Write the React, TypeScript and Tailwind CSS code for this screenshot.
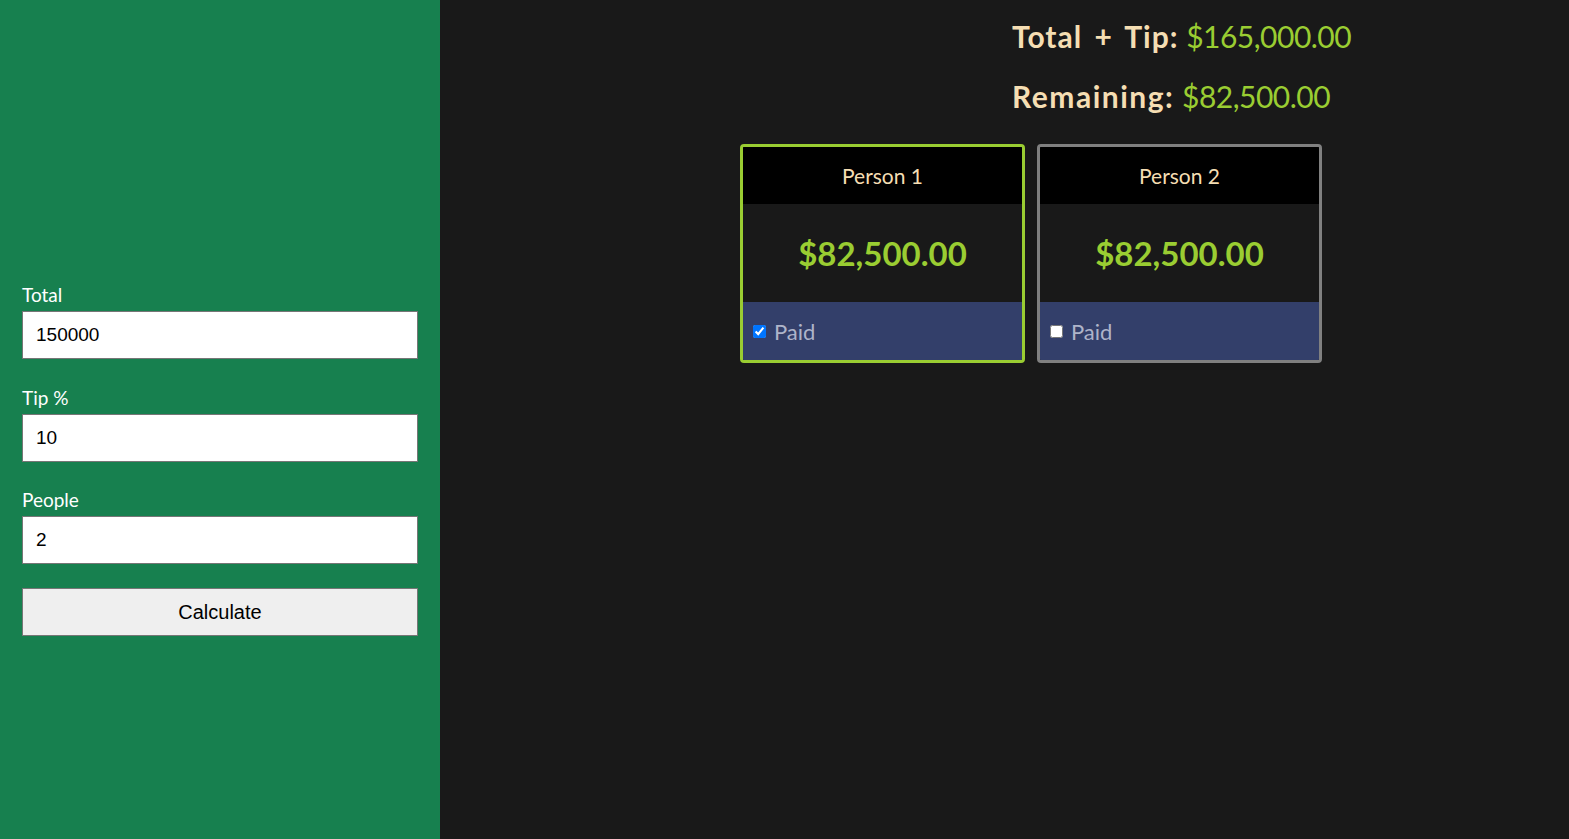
import { useState } from "react";

const font = { fontFamily: "Lato, 'Open Sans', sans-serif" };
const arial = { fontFamily: "'Liberation Sans', Arial, sans-serif" };

function Field({ label, value }: { label: string; value: string }) {
  return (
    <div className="mb-[26.5px]">
      <label className="block text-[19px] leading-[24px] text-white">{label}</label>
      <input
        defaultValue={value}
        className="mt-[4px] block h-[48px] w-full border border-[#767676] bg-white px-[13px] text-[19px] text-black outline-none"
        style={arial}
      />
    </div>
  );
}

function PersonCard({ name, amount, paid, onToggle }: { name: string; amount: string; paid: boolean; onToggle: () => void }) {
  return (
    <div
      className={`w-[285px] overflow-hidden rounded-[4px] border-[3px] ${
        paid ? "border-[#9acd32]" : "border-[#808080]"
      }`}
    >
      <div className="flex h-[57px] items-center justify-center bg-black text-[21px] text-[#f5deb3]">{name}</div>
      <div className="flex h-[98px] items-center justify-center bg-[#191919] pt-[2px] text-[33px] font-bold text-[#9acd32]">
        {amount}
      </div>
      <label className="flex h-[58px] items-center gap-[8px] bg-[#333f6a] px-[10px] text-[22px] text-[#aeb4c9]">
        <input type="checkbox" checked={paid} onChange={onToggle} className="h-[13px] w-[13px]" />
        Paid
      </label>
    </div>
  );
}

export default function App() {
  const [paid, setPaid] = useState([true, false]);

  return (
    <div className="flex h-[839px] w-full" style={font}>
      <aside className="w-[440px] shrink-0 bg-[#17804f] px-[22px] pt-[283px]">
        <Field label="Total" value="150000" />
        <Field label="Tip %" value="10" />
        <Field label="People" value="2" />
        <button
          className="mt-[-3px] block h-[48px] w-full border border-[#767676] bg-[#efefef] text-[20px] text-black"
          style={arial}
        >
          Calculate
        </button>
      </aside>
      <main className="flex-1 bg-[#191919]">
        <div className="pl-[572px] pt-[16px] text-[30px] leading-[40px]">
          <p>
            <span className="font-bold tracking-[1px] text-[#f5deb3] [word-spacing:4px]">Total + Tip:</span>{" "}
            <span className="tracking-[-0.5px] text-[#9acd32]">$165,000.00</span>
          </p>
          <p className="mt-[20px]">
            <span className="font-bold tracking-[1.5px] text-[#f5deb3]">Remaining:</span>{" "}
            <span className="tracking-[-0.5px] text-[#9acd32]">$82,500.00</span>
          </p>
        </div>
        <div className="mt-[28px] flex gap-[12px] pl-[300px]">
          {["Person 1", "Person 2"].map((name, i) => (
            <PersonCard
              key={name}
              name={name}
              amount="$82,500.00"
              paid={paid[i]}
              onToggle={() => setPaid(paid.map((p, j) => (j === i ? !p : p)))}
            />
          ))}
        </div>
      </main>
    </div>
  );
}
